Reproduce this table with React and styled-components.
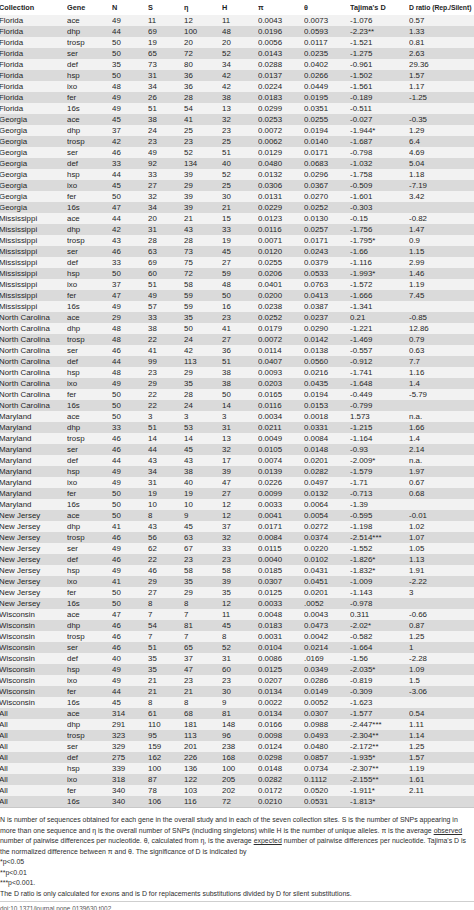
import React from 'react'
import styled, { createGlobalStyle } from 'styled-components'

const GlobalStyle = createGlobalStyle`
  html, body {
    margin: 0;
    padding: 0;
    background: #ffffff;
  }
  body {
    font-family: 'Liberation Sans', Arial, Helvetica, sans-serif;
    color: #262626;
  }
`

const cols = '68px 45px 36px 36px 38px 36px 46px 46px 59px 1fr'

const Page = styled.div`
  width: 474px;
  height: 910px;
  overflow: hidden;
`

const Table = styled.div`
  margin-left: -1px;
  width: 475px;
  border-bottom: 1px solid #c8c8c8;
`

const HeaderRow = styled.div`
  display: grid;
  grid-template-columns: ${cols};
  height: 15px;
  align-items: center;
  background: #ffffff;
  font-size: 7.3px;
  font-weight: bold;
  color: #1e1e1e;
`

const Row = styled.div`
  display: grid;
  grid-template-columns: ${cols};
  height: 11px;
  align-items: center;
  font-size: 7.9px;
  background: ${(props) => (props.shade ? '#dadada' : '#f2f2f2')};
`

const Cell = styled.div`
  white-space: nowrap;
  overflow: hidden;
  line-height: 11px;
`

const LastHead = styled(Cell)`
  font-size: 6.85px;
  letter-spacing: -0.05px;
`

const Notes = styled.div`
  padding: 7px 0 2px 0;
  font-size: 6.95px;
  line-height: 10.5px;
  color: #2e2e2e;
  border-bottom: 1px solid #cfcfcf;
`

const NoteLine = styled.div`
  white-space: nowrap;
`

const Under = styled.span`
  text-decoration: underline;
`

const Doi = styled.div`
  padding-top: 3px;
  font-size: 6.4px;
  color: #555;
`

const genes = ['ace', 'dhp', 'trosp', 'ser', 'def', 'hsp', 'ixo', 'fer', '16s']

const groups = [
  ['Florida', [
    [49, 11, 12, 11, '0.0043', '0.0073', '-1.076', '0.57'],
    [44, 69, 100, 48, '0.0196', '0.0593', '-2.23**', '1.33'],
    [50, 19, 20, 20, '0.0056', '0.0117', '-1.521', '0.81'],
    [50, 65, 72, 52, '0.0143', '0.0235', '-1.275', '2.63'],
    [35, 73, 80, 34, '0.0288', '0.0402', '-0.961', '29.36'],
    [50, 31, 36, 42, '0.0137', '0.0266', '-1.502', '1.57'],
    [48, 34, 36, 42, '0.0224', '0.0449', '-1.561', '1.17'],
    [49, 26, 28, 38, '0.0183', '0.0195', '-0.189', '-1.25'],
    [49, 51, 54, 13, '0.0299', '0.0351', '-0.511', ''],
  ]],
  ['Georgia', [
    [45, 38, 41, 32, '0.0253', '0.0255', '-0.027', '-0.35'],
    [37, 24, 25, 23, '0.0072', '0.0194', '-1.944*', '1.29'],
    [42, 23, 23, 25, '0.0062', '0.0140', '-1.687', '6.4'],
    [46, 49, 52, 51, '0.0129', '0.0171', '-0.798', '4.69'],
    [33, 92, 134, 40, '0.0480', '0.0683', '-1.032', '5.04'],
    [44, 33, 39, 52, '0.0132', '0.0296', '-1.758', '1.18'],
    [45, 27, 29, 25, '0.0306', '0.0367', '-0.509', '-7.19'],
    [50, 32, 39, 30, '0.0131', '0.0270', '-1.601', '3.42'],
    [47, 34, 39, 21, '0.0229', '0.0252', '-0.303', ''],
  ]],
  ['Mississippi', [
    [44, 20, 21, 15, '0.0123', '0.0130', '-0.15', '-0.82'],
    [42, 31, 43, 33, '0.0116', '0.0257', '-1.756', '1.47'],
    [43, 28, 28, 19, '0.0071', '0.0171', '-1.795*', '0.9'],
    [46, 63, 73, 45, '0.0120', '0.0243', '-1.66', '1.15'],
    [33, 69, 75, 27, '0.0255', '0.0379', '-1.116', '2.99'],
    [50, 60, 72, 59, '0.0206', '0.0533', '-1.993*', '1.46'],
    [37, 51, 58, 48, '0.0401', '0.0763', '-1.572', '1.19'],
    [47, 49, 59, 50, '0.0200', '0.0413', '-1.666', '7.45'],
    [49, 57, 59, 16, '0.0238', '0.0387', '-1.341', ''],
  ]],
  ['North Carolina', [
    [29, 33, 35, 23, '0.0252', '0.0237', '0.21', '-0.85'],
    [48, 38, 50, 41, '0.0179', '0.0290', '-1.221', '12.86'],
    [48, 22, 24, 27, '0.0072', '0.0142', '-1.469', '0.79'],
    [46, 41, 42, 36, '0.0114', '0.0138', '-0.557', '0.63'],
    [44, 99, 113, 51, '0.0407', '0.0560', '-0.912', '7.7'],
    [48, 23, 29, 38, '0.0093', '0.0216', '-1.741', '1.16'],
    [49, 29, 35, 38, '0.0203', '0.0435', '-1.648', '1.4'],
    [50, 22, 28, 50, '0.0165', '0.0194', '-0.449', '-5.79'],
    [50, 22, 24, 14, '0.0116', '0.0153', '-0.799', ''],
  ]],
  ['Maryland', [
    [50, 3, 3, 3, '0.0034', '0.0018', '1.573', 'n.a.'],
    [33, 51, 53, 31, '0.0211', '0.0331', '-1.215', '1.66'],
    [46, 14, 14, 13, '0.0049', '0.0084', '-1.164', '1.4'],
    [46, 44, 45, 32, '0.0105', '0.0148', '-0.93', '2.14'],
    [44, 43, 43, 17, '0.0074', '0.0201', '-2.009*', 'n.a.'],
    [49, 34, 38, 39, '0.0139', '0.0282', '-1.579', '1.97'],
    [49, 31, 40, 47, '0.0226', '0.0497', '-1.71', '0.67'],
    [50, 19, 19, 27, '0.0099', '0.0132', '-0.713', '0.68'],
    [50, 10, 10, 12, '0.0033', '0.0064', '-1.39', ''],
  ]],
  ['New Jersey', [
    [50, 8, 9, 12, '0.0041', '0.0054', '-0.595', '-0.01'],
    [41, 43, 45, 37, '0.0171', '0.0272', '-1.198', '1.02'],
    [46, 56, 63, 32, '0.0084', '0.0374', '-2.514***', '1.07'],
    [49, 62, 67, 33, '0.0115', '0.0220', '-1.552', '1.05'],
    [46, 22, 23, 23, '0.0040', '0.0102', '-1.826*', '1.13'],
    [49, 46, 58, 58, '0.0185', '0.0431', '-1.832*', '1.91'],
    [41, 29, 35, 39, '0.0307', '0.0451', '-1.009', '-2.22'],
    [50, 27, 29, 35, '0.0125', '0.0201', '-1.143', '3'],
    [50, 8, 8, 12, '0.0033', '.0052', '-0.978', ''],
  ]],
  ['Wisconsin', [
    [47, 7, 7, 11, '0.0048', '0.0043', '0.311', '-0.66'],
    [46, 54, 81, 45, '0.0183', '0.0473', '-2.02*', '0.87'],
    [46, 7, 7, 8, '0.0031', '0.0042', '-0.582', '1.25'],
    [46, 51, 65, 52, '0.0104', '0.0214', '-1.664', '1'],
    [40, 35, 37, 31, '0.0086', '.0169', '-1.56', '-2.28'],
    [49, 35, 47, 60, '0.0125', '0.0349', '-2.035*', '1.09'],
    [49, 21, 23, 23, '0.0207', '0.0286', '-0.819', '1.5'],
    [44, 21, 21, 30, '0.0134', '0.0149', '-0.309', '-3.06'],
    [45, 8, 8, 9, '0.0022', '0.0052', '-1.623', ''],
  ]],
  ['All', [
    [314, 61, 68, 81, '0.0134', '0.0307', '-1.577', '0.54'],
    [291, 110, 181, 148, '0.0166', '0.0988', '-2.447***', '1.11'],
    [323, 95, 113, 96, '0.0098', '0.0493', '-2.304**', '1.14'],
    [329, 159, 201, 238, '0.0124', '0.0480', '-2.172**', '1.25'],
    [275, 162, 226, 168, '0.0298', '0.0857', '-1.935*', '1.57'],
    [339, 100, 136, 100, '0.0148', '0.0734', '-2.307**', '1.19'],
    [318, 87, 122, 205, '0.0282', '0.1112', '-2.155**', '1.61'],
    [340, 78, 103, 202, '0.0172', '0.0520', '-1.911*', '2.11'],
    [340, 106, 116, 72, '0.0210', '0.0531', '-1.813*', ''],
  ]],
]

const rows = groups.flatMap(([site, list]) =>
  list.map((vals, i) => [site, genes[i], ...vals])
)

const headers = ['Collection', 'Gene', 'N', 'S', 'η', 'H', 'π', 'θ', "Tajima's D"]

export default function App() {
  return (
    <Page>
      <GlobalStyle />
      <Table>
        <HeaderRow>
          {headers.map((h) => (
            <Cell key={h}>{h}</Cell>
          ))}
          <LastHead>D ratio (Rep./Silent)</LastHead>
        </HeaderRow>
        {rows.map((r, i) => (
          <Row key={i} shade={i % 2 === 1}>
            {r.map((v, j) => (
              <Cell key={j}>{v}</Cell>
            ))}
          </Row>
        ))}
      </Table>
      <Notes>
        <NoteLine>N is number of sequences obtained for each gene in the overall study and in each of the seven collection sites. S is the number of SNPs appearing in</NoteLine>
        <NoteLine>more than one sequence and η is the overall number of SNPs (including singletons) while H is the number of unique alleles. π is the average <Under>observed</Under></NoteLine>
        <NoteLine>number of pairwise differences per nucleotide. θ, calculated from η, is the average <Under>expected</Under> number of pairwise differences per nucleotide. Tajima's D is</NoteLine>
        <NoteLine>the normalized difference between π and θ. The significance of D is indicated by</NoteLine>
        <NoteLine>*p&lt;0.05</NoteLine>
        <NoteLine>**p&lt;0.01</NoteLine>
        <NoteLine>***p&lt;0.001.</NoteLine>
        <NoteLine>The D ratio is only calculated for exons and is D for replacements substitutions divided by D for silent substitutions.</NoteLine>
      </Notes>
      <Doi>doi:10.1371/journal.pone.0139630.t002</Doi>
    </Page>
  )
}
